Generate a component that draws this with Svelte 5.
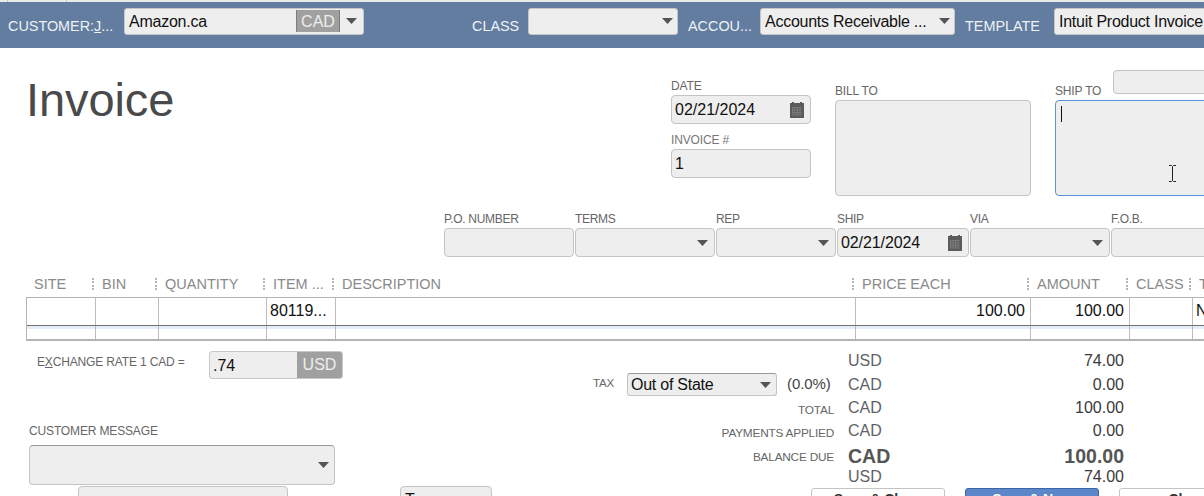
<script>
  const fieldsRow = [
    { label: 'P.O. NUMBER', w: 131 },
    { label: 'TERMS', w: 141, arrow: true },
    { label: 'REP', w: 121, arrow: true },
    { label: 'SHIP', w: 133, value: '02/21/2024', cal: true },
    { label: 'VIA', w: 141, arrow: true },
    { label: 'F.O.B.', w: 120 }
  ];
  const cols = ['SITE', 'BIN', 'QUANTITY', 'ITEM ...', 'DESCRIPTION', 'PRICE EACH', 'AMOUNT', 'CLASS', 'T'];
  const row1 = ['', '', '', '80119...', '', '100.00', '100.00', '', 'N'];
  const totals = [
    { label: '', cur: 'USD', amt: '74.00' },
    { label: 'TAX', cur: 'CAD', amt: '0.00', tax: true },
    { label: 'TOTAL', cur: 'CAD', amt: '100.00' },
    { label: 'PAYMENTS APPLIED', cur: 'CAD', amt: '0.00' },
    { label: 'BALANCE DUE', cur: 'CAD', amt: '100.00', big: true },
    { label: '', cur: 'USD', amt: '74.00' }
  ];
</script>

{#snippet arrow()}
  <svg class="arrow" width="11" height="6" viewBox="0 0 11 6"><path d="M0 0h11L5.500 6z" fill="#555" /></svg>
{/snippet}

{#snippet cal()}
  <svg class="cal" width="14" height="16" viewBox="0 0 14 16">
    <path d="M0 1h2V0h2v1h6V0h2v1h2v15H0z" fill="#5b5b5b" />
    <path d="M2.500 5v8M5 5v8M7.500 5v8M10 5v8M2 5.500h9.500M2 8h9.500M2 10.500h9.500M2 13h9.500" stroke="#7a7a7a" stroke-width="1" />
  </svg>
{/snippet}

<div class="page">
  <div class="strip"><i></i><i></i></div>

  <header class="bar">
    <span class="blabel first">CUSTOMER:<u>J</u>...</span>
    <div class="combo customer">
      <span class="val">Amazon.ca</span>
      <span class="cur">CAD</span>
      <span class="drop">{@render arrow()}</span>
    </div>
    <span class="blabel cls">CLASS</span>
    <div class="combo classbox"><span class="val"></span><span class="drop">{@render arrow()}</span></div>
    <span class="blabel acc">ACCOU...</span>
    <div class="combo account"><span class="val">Accounts Receivable ...</span><span class="drop">{@render arrow()}</span></div>
    <span class="blabel tpl">TEMPLATE</span>
    <div class="combo template"><span class="val">Intuit Product Invoice</span></div>
  </header>

  <section class="head">
    <h1>Invoice</h1>
    <div class="datecol">
      <span class="lbl">DATE</span>
      <div class="input date"><span>02/21/2024</span>{@render cal()}</div>
      <span class="lbl inv">INVOICE #</span>
      <div class="input date"><span>1</span></div>
    </div>
    <div class="billcol">
      <span class="lbl">BILL TO</span>
      <div class="box"></div>
    </div>
    <div class="shipcol">
      <div class="shiptop">
        <span class="lbl">SHIP TO</span>
        <div class="mini"></div>
      </div>
      <div class="box focus"><span class="caret"></span>
        <svg class="ibeam" width="9" height="17" viewBox="0 0 9 17"><path d="M1 .5h2.500l1 1 1-1H8M4.500 1.500v14M1 16.500h2.500l1-1 1 1H8" fill="none" stroke="#222" /></svg>
      </div>
    </div>
  </section>

  <section class="fields">
    {#each fieldsRow as f}
      <div class="field" style="width:{f.w}px">
        <span class="lbl">{f.label}</span>
        <div class="input tall">
          <span>{f.value ?? ''}</span>
          {#if f.arrow}{@render arrow()}{/if}
          {#if f.cal}{@render cal()}{/if}
        </div>
      </div>
    {/each}
  </section>

  <section class="table">
    <div class="thead">
      {#each cols as c, i}
        <div class="th">{#if i > 0}<span class="grip"></span>{/if}<span>{c}</span></div>
      {/each}
    </div>
    <div class="tbody">
      <div class="tr r1">
        {#each row1 as c, i}
          <div class="td" class:num={i === 5 || i === 6}>{c}</div>
        {/each}
      </div>
      <div class="tr r2">
        {#each row1 as _}
          <div class="td"></div>
        {/each}
      </div>
    </div>
  </section>

  <section class="foot">
    <div class="left">
      <div class="xrate">
        <span class="lbl xl">E<u>X</u>CHANGE RATE 1 CAD =</span>
        <div class="rate"><span class="rv">.74</span><span class="ru">USD</span></div>
      </div>
      <span class="lbl cm">CUSTOMER MESSAGE</span>
      <div class="input msg">{@render arrow()}</div>
    </div>
    <div class="right">
      {#each totals as t}
        <div class="trow" class:big={t.big}>
          <div class="tl">
            {#if t.tax}
              <span class="lbl taxl">TAX</span>
              <div class="input tax"><span>Out of State</span>{@render arrow()}</div>
              <span class="pct">(0.0%)</span>
            {:else}
              <span class="lbl">{t.label}</span>
            {/if}
          </div>
          <span class="tc">{t.cur}</span>
          <span class="ta">{t.amt}</span>
        </div>
      {/each}
    </div>
  </section>

  <section class="bottom">
    <div class="stub a"></div>
    <div class="stub b">T</div>
    <div class="btn c">Save &amp; Close</div>
    <div class="btn n">Save &amp; New</div>
    <div class="btn l">Clear</div>
  </section>
</div>

<style>
  :global(body) { margin: 0; background: #fff; }
  .page {
    width: 1204px; height: 496px; overflow: hidden; position: relative;
    font-family: "Liberation Sans", Arial, sans-serif; color: #111; background: #fff;
  }
  .strip { height: 2px; background: #eaeaea; display: flex; padding-left: 7px; gap: 58px; }
  .strip i { width: 1px; background: #c8c8c8; }

  .bar {
    height: 46px; background: #627d9f; display: flex; align-items: flex-start;
    padding-top: 6px; box-sizing: border-box; width: 1300px;
  }
  .blabel { font-size: 14.400px; color: #eef2f6; margin-top: 10px; line-height: 16px; white-space: nowrap; flex: none; }
  .blabel.first { margin-left: 8px; width: 116px; }
  .blabel.cls { margin-left: 108px; width: 56px; }
  .blabel.acc { margin-left: 10px; width: 72px; }
  .blabel.tpl { margin-left: 10px; width: 89px; }
  .combo {
    height: 27px; box-sizing: border-box; background: #eee; border: 1px solid #c6c6c6;
    border-radius: 3px; display: flex; align-items: stretch; font-size: 16px; line-height: 25px; flex: none;
  }
  .val { flex: 1; padding-left: 4px; white-space: nowrap; overflow: hidden; letter-spacing: -.25px; }
  .customer { width: 240px; }
  .cur { background: #a0a0a0; color: #eee; width: 44px; box-sizing: border-box; text-align: center; margin: 1px 0 2px; border: 0 solid #7d7d7d; border-width: 0 1px; line-height: 23px; }
  .drop { width: 23px; display: flex; align-items: center; justify-content: center; padding-bottom: 2px; }
  .classbox { width: 150px; }
  .account { width: 195px; }
  .template { width: 160px; }
  .account .drop, .classbox .drop { width: 20px; flex: none; }

  .head { display: flex; height: 164px; }
  h1 {
    margin: 0 0 0 26px; width: 645px; flex: none; font-size: 47px; font-weight: 400; color: #4a4a4a;
    line-height: 54px; padding-top: 25px; letter-spacing: -.1px;
  }
  .lbl { font-size: 12px; color: #666; line-height: 14px; display: block; white-space: nowrap; letter-spacing: -.15px; }
  .datecol { width: 164px; padding-top: 31px; flex: none; }
  .input {
    box-sizing: border-box; background: #eee; border: 1px solid #c4c4c4; border-radius: 4px;
    display: flex; align-items: center; justify-content: space-between; font-size: 16px; padding: 0 6px 0 3px;
  }
  .date { width: 140px; height: 29px; margin-top: 2px; }
  .inv { margin-top: 9px; color: #777; }
  .billcol { width: 220px; padding-top: 36px; flex: none; }
  .box { height: 96px; box-sizing: border-box; background: #eee; border: 1px solid #c4c4c4; border-radius: 4px; }
  .billcol .box { width: 196px; margin-top: 2px; }
  .shipcol { padding-top: 22px; width: 200px; flex: none; }
  .shiptop { display: flex; height: 27px; }
  .shiptop .lbl { width: 58px; margin-top: 14px; flex: none; }
  .mini { width: 120px; height: 24px; background: #eee; border: 1px solid #c4c4c4; border-radius: 4px; box-sizing: border-box; flex: none; }
  .focus { border-color: #5f8fd8; margin-top: 3px; padding: 5px 0 0 5px; width: 160px; position: relative; }
  .caret { display: block; width: 1px; height: 16px; background: #111; }
  .ibeam { position: absolute; left: 112px; top: 64px; }

  .fields { display: flex; padding-left: 444px; height: 59px; box-sizing: border-box; width: 1300px; }
  .field { flex: none; }
  .field .lbl { letter-spacing: -.3px; height: 14px; }
  .tall { height: 29px; margin-top: 2px; width: calc(100% - 1px); }
  .tall span { letter-spacing: -.1px; }

  .table { margin-left: 26px; width: 1300px; }
  .thead, .tr {
    display: grid;
    grid-template-columns: 69px 63px 108px 69px 520px 175px 99px 63px 200px;
  }
  .thead { height: 26px; align-items: center; }
  .th { font-size: 14.500px; color: #8a8a8a; display: flex; align-items: center; padding-left: 7px; white-space: nowrap; position: relative; line-height: 16px; }
  .th:first-child { padding-left: 8px; }
  .grip { position: absolute; left: -3px; top: 2px; height: 12px; border-left: 2px dotted #b5b5b5; }
  .tbody { border-top: 1px solid #b4b4b4; border-left: 1px solid #b4b4b4; border-bottom: 2px solid #b4b4b4; }
  .tr.r1 { height: 27px; border-bottom: 1px solid #707070; }
  .tr.r2 { height: 13px; background: linear-gradient(#e4eef9 0 3px, #fff 3px); }
  .td { border-right: 1px solid #bcbcbc; font-size: 16px; line-height: 26px; padding: 0 5px 0 3px; box-sizing: border-box; white-space: nowrap; overflow: hidden; }
  .td.num { text-align: right; }

  .foot { display: flex; height: 145px; }
  .left { width: 593px; padding-left: 29px; box-sizing: border-box; flex: none; }
  .xrate { display: flex; margin-top: 10px; height: 28px; }
  .xl { width: 180px; padding-left: 8px; box-sizing: border-box; margin-top: 4px; flex: none; }
  .rate { width: 134px; height: 28px; box-sizing: border-box; background: #eee; border: 1px solid #c8c8c8; border-radius: 3px; display: flex; font-size: 16px; line-height: 27px; overflow: hidden; flex: none; }
  .rv { flex: 1; padding-left: 3px; }
  .ru { width: 45px; background: #a0a0a0; color: #eee; text-align: center; line-height: 26px; }
  .cm { margin-top: 45px; }
  .msg { width: 306px; height: 40px; margin-top: 7px; padding-right: 5px; justify-content: flex-end; border-top-color: #999; }
  .right { padding-top: 9px; flex: none; }
  .trow { display: grid; grid-template-columns: 241px 46px 244px; height: 23.300px; align-items: center; margin-top: -.2px; }
  .trow:last-child { margin-top: -6px; }
  .tl { display: flex; justify-content: flex-end; align-items: center; font-size: 12px; }
  .tl .lbl { font-size: 11.800px; letter-spacing: -.2px; margin-top: 4px; }
  .big .tl .lbl { margin-top: 0; }
  .tl .taxl { font-size: 11.500px; margin: 0 auto 4px 0; }
  .tc { font-size: 16px; color: #5f6368; margin-left: 14px; }
  .ta { font-size: 16px; color: #3a3a3a; text-align: right; }
  .trow.big { height: 29px; }
  .big .tc, .big .ta { font-size: 19.500px; font-weight: 700; color: #555; white-space: nowrap; }
  .tax { width: 150px; height: 23px; padding: 0 5px 0 3px; margin-right: 10px; border-top-color: #999; border-radius: 3px; letter-spacing: -.25px; }
  .pct { font-size: 15px; width: 47px; color: #444; position: relative; top: -1px; letter-spacing: -.1px; }

  .bottom { display: flex; padding-left: 78px; width: 1300px; height: 10px; }
  .stub { box-sizing: border-box; height: 24px; background: #eee; border: 1px solid #c4c4c4; border-radius: 4px; font-size: 16px; padding-left: 4px; flex: none; line-height: 18px; }
  .stub.a { width: 210px; }
  .stub.b { width: 92px; margin-left: 112px; padding-top: 4px; }
  .btn { box-sizing: border-box; width: 134px; height: 30px; margin-top: 2px; border: 1px solid #c4c4c4; border-radius: 3px; text-align: center; font-size: 14px; font-weight: 700; line-height: 16px; padding-top: 2px; color: #333; background: #fff; flex: none; }
  .btn.c { margin-left: 319px; }
  .btn.n { margin-left: 20px; background: #5b87c9; border-color: #3b66a8; color: #fff; }
  .btn.l { margin-left: 20px; }
  .arrow { flex: none; }
  .cal { flex: none; }
</style>
